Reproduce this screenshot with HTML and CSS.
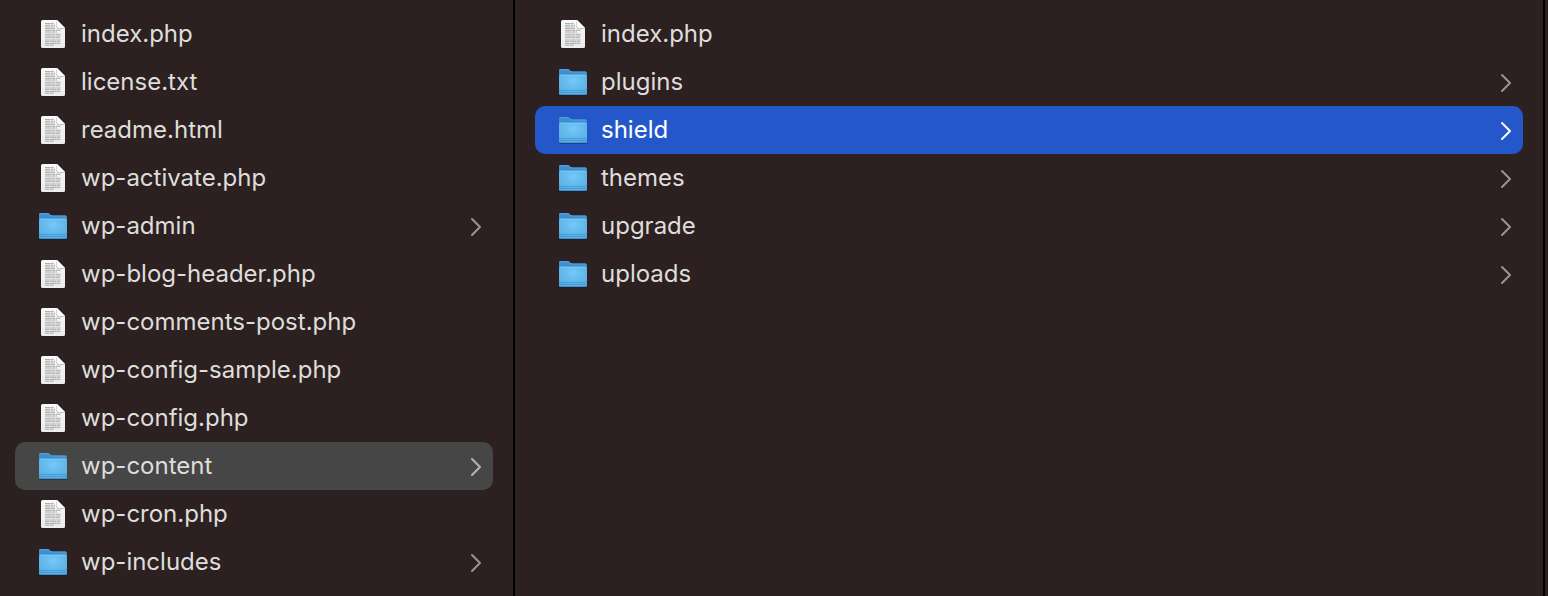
FILE: index.html
```
<!DOCTYPE html>
<html lang="en">
<head>
    <meta charset="UTF-8">
    <meta name="viewport" content="width=device-width, initial-scale=1.0">
    <title>wp-content</title>
    <link rel="stylesheet" href="styles.css">
</head>
<body>
    <!-- shared icons -->
    <svg class="sprites" aria-hidden="true">
        <defs>
            <linearGradient id="paper" x1="0" y1="0" x2="0" y2="1">
                <stop offset="0" stop-color="#f8f8f8"/>
                <stop offset="1" stop-color="#ececec"/>
            </linearGradient>
            <radialGradient id="front" cx="0.5" cy="0.3" r="0.8">
                <stop offset="0" stop-color="#74c8f8"/>
                <stop offset="1" stop-color="#53a9e0"/>
            </radialGradient>
        </defs>
        <symbol id="file" viewBox="0 0 32 32">
            <path fill="url(#paper)" d="M5.500 2H20L28 10V28.500Q28 30 26.500 30H5.500Q4 30 4 28.500V3.500Q4 2 5.500 2Z"/>
            <path fill="#b4b4b4" d="M19.500 2.500V9Q19.500 10.800 21 10.800H28V10Z"/>
            <path fill="#fafafa" d="M20 2V8.500Q20 10 21.500 10H28Z"/>
            <g fill="none" stroke="#a4a4a4" stroke-width="0.900">
                <path stroke-dasharray="5 0.500 3 0.400" d="M8 5.500H17M8 7.200H18M8 8.900H18"/>
                <path stroke-dasharray="6 0.400 4 0.500" d="M8 10.600H18M8 12.300H23.500M8 14H20M8 16.200H23.500M8 18H23.500M8 19.700H23"/>
                <path stroke-dasharray="4 0.400 7 0.400" d="M8 22H23.500M8 23.700H23M8 25.400H23.500M8 27.100H17"/>
            </g>
        </symbol>
        <symbol id="folder" viewBox="0 0 32 32">
            <rect x="2" y="27" width="28" height="3" rx="1" fill="#000" opacity="0.300"/>
            <path fill="#3e8fd0" d="M3.500 3H10.500Q11.800 3 12.700 4L13.300 4.600Q14.200 5.500 15.500 5.500H28.500Q30 5.500 30 7V20H2V4.500Q2 3 3.500 3Z"/>
            <path fill="none" stroke="#5aa9e0" stroke-width="0.800" d="M2.500 3.700H10.500Q11.500 3.700 12.300 4.500Q13.500 6 15.300 6H29"/>
            <path fill="url(#front)" d="M2 10Q2 8.800 3.200 8.800H28.800Q30 8.800 30 10V27.800Q30 29 28.800 29H3.200Q2 29 2 27.800Z"/>
            <path stroke="#85d2fc" stroke-width="0.700" d="M3 9.200H29"/>
            <path stroke="#4398d2" stroke-width="0.800" d="M2 24.500H30M2 26.500H30"/>
            <path stroke="#3c8cc4" stroke-width="0.800" d="M3 28.600H29"/>
        </symbol>
        <symbol id="chevron" viewBox="0 0 12 20">
            <path fill="none" stroke="currentColor" stroke-width="2" stroke-linecap="round" stroke-linejoin="round" d="M2 2L10 10L2 18"/>
        </symbol>
    </svg>

    <main class="browser">
        <ul class="column column-root">
            <li><a class="row" href="#"><svg class="icon"><use href="#file"/></svg><span class="name">index.php</span></a></li>
            <li><a class="row" href="#"><svg class="icon"><use href="#file"/></svg><span class="name">license.txt</span></a></li>
            <li><a class="row" href="#"><svg class="icon"><use href="#file"/></svg><span class="name">readme.html</span></a></li>
            <li><a class="row" href="#"><svg class="icon"><use href="#file"/></svg><span class="name">wp-activate.php</span></a></li>
            <li><a class="row" href="#"><svg class="icon"><use href="#folder"/></svg><span class="name">wp-admin</span><svg class="chevron"><use href="#chevron"/></svg></a></li>
            <li><a class="row" href="#"><svg class="icon"><use href="#file"/></svg><span class="name">wp-blog-header.php</span></a></li>
            <li><a class="row" href="#"><svg class="icon"><use href="#file"/></svg><span class="name">wp-comments-post.php</span></a></li>
            <li><a class="row" href="#"><svg class="icon"><use href="#file"/></svg><span class="name">wp-config-sample.php</span></a></li>
            <li><a class="row" href="#"><svg class="icon"><use href="#file"/></svg><span class="name">wp-config.php</span></a></li>
            <li><a class="row open" href="#"><svg class="icon"><use href="#folder"/></svg><span class="name">wp-content</span><svg class="chevron"><use href="#chevron"/></svg></a></li>
            <li><a class="row" href="#"><svg class="icon"><use href="#file"/></svg><span class="name">wp-cron.php</span></a></li>
            <li><a class="row" href="#"><svg class="icon"><use href="#folder"/></svg><span class="name">wp-includes</span><svg class="chevron"><use href="#chevron"/></svg></a></li>
        </ul>

        <ul class="column column-content">
            <li><a class="row" href="#"><svg class="icon"><use href="#file"/></svg><span class="name">index.php</span></a></li>
            <li><a class="row" href="#"><svg class="icon"><use href="#folder"/></svg><span class="name">plugins</span><svg class="chevron"><use href="#chevron"/></svg></a></li>
            <li><a class="row selected" href="#"><svg class="icon"><use href="#folder"/></svg><span class="name">shield</span><svg class="chevron"><use href="#chevron"/></svg></a></li>
            <li><a class="row" href="#"><svg class="icon"><use href="#folder"/></svg><span class="name">themes</span><svg class="chevron"><use href="#chevron"/></svg></a></li>
            <li><a class="row" href="#"><svg class="icon"><use href="#folder"/></svg><span class="name">upgrade</span><svg class="chevron"><use href="#chevron"/></svg></a></li>
            <li><a class="row" href="#"><svg class="icon"><use href="#folder"/></svg><span class="name">uploads</span><svg class="chevron"><use href="#chevron"/></svg></a></li>
        </ul>
    </main>
</body>
</html>
```
FILE: styles.css
```
* {
    box-sizing: border-box;
}
body {
    margin: 0;
    background-color: #2c2120;
    color: #dfdddc;
    font-family: Inter, "Liberation Sans", sans-serif;
    font-size: 24px;
    font-weight: 430;
}
.sprites {
    position: absolute;
    width: 0;
    height: 0;
}
.browser {
    display: flex;
    min-height: 100vh;
    padding-right: 3px;
}
.column {
    margin: 0;
    padding: 10px 20px;
    list-style: none;
    border-right: 2px solid #000000;
}
.column-root {
    flex: 0 0 515px;
    padding-left: 15px;
}
.column-content {
    flex: 1;
}
.row {
    display: flex;
    align-items: center;
    gap: 12px;
    height: 48px;
    padding: 0 11px 0 22px;
    border-radius: 10px;
    color: inherit;
    text-decoration: none;
}
.row.open {
    background-color: #464646;
}
.row.selected {
    background-color: #2458ca;
    color: #ffffff;
}
.icon {
    flex: none;
    width: 32px;
    height: 32px;
}
.name {
    flex: 1;
    line-height: 32px;
}
.chevron {
    flex: none;
    width: 12px;
    height: 20px;
    margin-top: 2px;
    color: #9a9493;
}
.open .chevron {
    color: #b4b4b4;
}
.selected .chevron {
    color: #ffffff;
}
```
